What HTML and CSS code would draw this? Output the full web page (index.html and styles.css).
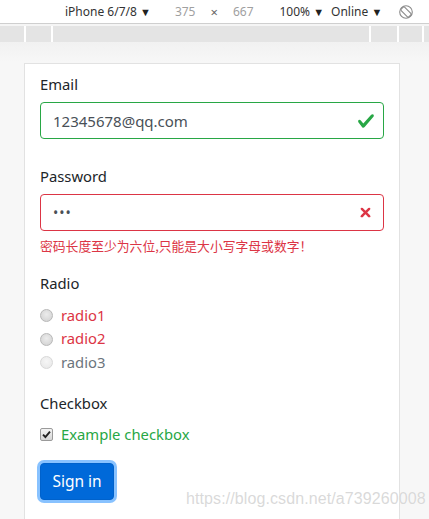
FILE: index.html
```html
<!DOCTYPE html>
<html lang="en">
<head>
<meta charset="utf-8">
<title>Form validation</title>
<link rel="stylesheet" href="styles.css">
</head>
<body>
<div class="devtools">
  <span class="device">iPhone 6/7/8 <span class="caret">▼</span></span>
  <span class="dim">375</span>
  <span class="times">×</span>
  <span class="dim">667</span>
  <span class="zoom">100% <span class="caret">▼</span></span>
  <span class="net">Online <span class="caret">▼</span></span>
  <svg class="rotate" width="16" height="16" viewBox="0 0 16 16">
    <circle cx="8" cy="8" r="6.3" fill="none" stroke="#8a8a8a" stroke-width="1.1"/>
    <rect x="5.6" y="2.6" width="4.8" height="10.8" rx="1" fill="none" stroke="#8a8a8a" stroke-width="1.1" transform="rotate(-45 8 8)"/>
  </svg>
</div>
<div class="ruler">
  <div class="seg s1"></div>
  <div class="seg s2"></div>
  <div class="seg s3"></div>
  <div class="seg s4"></div>
  <div class="seg s5"></div>
  <div class="seg s6"></div>
</div>
<div class="page">
  <form class="card">
    <div class="group">
      <label class="label" for="email">Email</label>
      <div class="field valid">
        <input id="email" class="control" type="text" value="12345678@qq.com">
        <svg class="state-icon" width="18" height="18" viewBox="0 0 8 8"><path fill="#28a745" d="M2.3 6.73L.6 4.53c-.4-1.04.46-1.4 1.1-.8l1.1 1.4 3.4-3.8c.6-.63 1.6-.27 1.2.7l-4 4.6c-.43.5-.8.4-1.1.1z"/></svg>
      </div>
    </div>
    <div class="group pw">
      <label class="label" for="pw">Password</label>
      <div class="field invalid">
        <input id="pw" class="control" type="password" value="123">
        <svg class="state-icon" width="18" height="18" viewBox="-2 -2 7 7" fill="#dc3545"><path stroke="#dc3545" d="M0 0l3 3m0-3L0 3"/><circle r=".5"/><circle cx="3" r=".5"/><circle cy="3" r=".5"/><circle cx="3" cy="3" r=".5"/></svg>
      </div>
      <div class="feedback">密码长度至少为六位,只能是大小写字母或数字！</div>
    </div>
    <div class="group radios">
      <div class="label">Radio</div>
      <label class="check red"><span class="radio"></span>radio1</label>
      <label class="check red"><span class="radio"></span>radio2</label>
      <label class="check disabled"><span class="radio"></span>radio3</label>
    </div>
    <div class="group checks">
      <div class="label">Checkbox</div>
      <label class="check green"><span class="box"><svg width="9" height="9" viewBox="0 0 9 9"><path d="M1 4.6 L3.4 7 L8 1.6" fill="none" stroke="#222" stroke-width="1.9"/></svg></span>Example checkbox</label>
    </div>
    <button class="btn" type="button">Sign in</button>
  </form>
  <div class="watermark">https://blog.csdn.net/a739260008</div>
</div>
</body>
</html>
```
FILE: styles.css
```css
html, body {
  margin: 0;
  padding: 0;
  height: 100%;
  overflow: hidden;
}
body {
  background: #f5f5f5;
  font-family: "Noto Sans", "Open Sans", sans-serif;
}
.devtools {
  height: 24px;
  background: #fff;
  border-bottom: 1px solid #cfcfcf;
  box-sizing: border-box;
  display: flex;
  align-items: center;
  font-size: 12px;
  color: #333;
  padding-left: 65px;
  position: relative;
}
.caret { font-size: 11px; color: #222; }
.dim { color: #a0a0a0; }
.device { margin-right: 24px; }
.times { color: #666; margin: 0 15px 0 15px; font-size: 13px; }
.zoom { margin-left: 26px; margin-right: 7px; }
.rotate { margin-left: 16px; }
.ruler {
  margin-top: 2px;
  height: 16px;
  display: flex;
  gap: 2px;
  background: #fff;
}
.seg { background: #e4e4e4; height: 16px; }
.s1 { width: 24px; }
.s2 { width: 25px; }
.s3 { width: 316px; }
.s4 { width: 26px; }
.s5 { width: 23px; }
.s6 { flex: 1; }
.page {
  position: relative;
  padding: 21px 0 0 24px;
  background: linear-gradient(#f1f1f1, #f7f7f7 20px);
  height: 100%;
}
.card {
  width: 376px;
  box-sizing: border-box;
  background: #fff;
  border: 1px solid #e2e2e2;
  padding: 8px 15px 40px 15px;
  color: #212529;
  font-size: 14.8px;
}
.label {
  display: block;
  line-height: 24px;
  font-size: 14.8px;
}
.field {
  position: relative;
  margin-top: 6px;
}
.control {
  display: block;
  width: 100%;
  box-sizing: border-box;
  height: 37px;
  padding: 0 40px 0 12px;
  border-radius: 4px;
  font-family: inherit;
  font-size: 15px;
  color: #495057;
  background: #fff;
  outline: none;
}
.valid .control { border: 1px solid #28a745; }
.invalid .control { border: 1px solid #dc3545; }
#pw { font-size: 14px; letter-spacing: 1px; }
.state-icon {
  position: absolute;
  right: 9px;
  top: 9.5px;
}
.invalid .state-icon { right: 10px; width: 17px; height: 17px; top: 10px; }
.pw { margin-top: 25px; }
.feedback {
  margin-top: 5px;
  line-height: 19px;
  font-size: 12.8px;
  color: #dc3545;
  font-family: "Noto Sans CJK SC", "Noto Sans", sans-serif;
}
.radios { margin-top: 16px; }
.radios .label { margin-bottom: 9px; }
.check {
  display: flex;
  align-items: center;
  line-height: 23.4px;
  font-size: 14.8px;
}
.red { color: #dc3545; }
.disabled { color: #6c757d; }
.green { color: #28a745; }
.radio {
  width: 11px;
  height: 11px;
  border-radius: 50%;
  border: 1px solid #b8b8b8;
  background: radial-gradient(circle at 50% 40%, #ececec, #cfcfcf);
  margin-right: 8px;
  flex: none;
}
.disabled .radio {
  border-color: #d8d8d8;
  background: radial-gradient(circle at 50% 40%, #f6f6f6, #e6e6e6);
}
.checks { margin-top: 17px; }
.checks .label { margin-bottom: 8px; }
.box {
  width: 11px;
  height: 11px;
  border: 1px solid #9a9a9a;
  border-radius: 2px;
  background: linear-gradient(#f4f4f4, #d6d6d6);
  margin-right: 8px;
  display: flex;
  align-items: center;
  justify-content: center;
  flex: none;
}
.btn {
  display: block;
  margin-top: 16px;
  height: 37px;
  width: 74px;
  padding: 0;
  border: 1px solid #0062cc;
  border-radius: 4px;
  background: #0069d9;
  color: #fff;
  font-family: inherit;
  font-size: 15.5px;
  box-shadow: 0 0 0 3px rgba(38, 143, 255, 0.55);
}
.watermark {
  position: absolute;
  left: 186px;
  top: 448px;
  font-family: "Liberation Sans", Arial, sans-serif;
  font-size: 16px;
  color: rgba(180, 180, 180, 0.5);
  text-shadow: 0 0 1px #fff;
  letter-spacing: 0.1px;
}
```
